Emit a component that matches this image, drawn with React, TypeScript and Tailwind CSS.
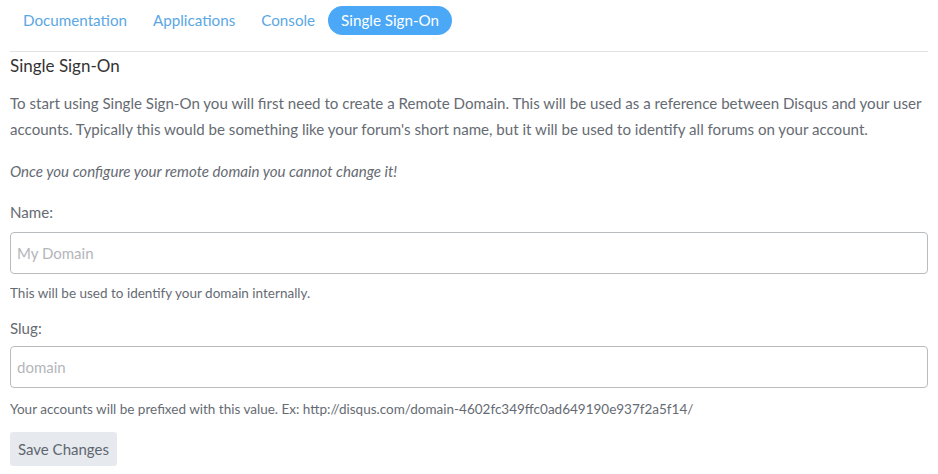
const tabs = ['Documentation', 'Applications', 'Console', 'Single Sign-On'];

const App = () => {
  const active = 'Single Sign-On';

  return (
    <div className="min-h-screen bg-white px-[10px] font-['Lato','Liberation_Sans',sans-serif] text-[15.1px] text-[#666b73]">
      <nav className="flex items-center pt-[6px] pb-[16px] border-b border-[#e2e2e2]">
        {tabs.map((tab) => (
          <a
            key={tab}
            className={
              tab === active
                ? 'h-[29px] px-[13px] flex items-center rounded-full bg-[#4aa8f6] text-[15.2px] text-white'
                : 'h-[29px] px-[13px] flex items-center text-[15.2px] text-[#5aa7e4]'
            }
          >
            {tab}
          </a>
        ))}
      </nav>

      <h2 className="mt-[1px] text-[17px] leading-[26px] text-[#333]">Single Sign-On</h2>

      <p className="mt-[11px] leading-[26px]">
        To start using Single Sign-On you will first need to create a Remote Domain. This will be used as a
        reference between Disqus and your user accounts. Typically this would be something like your forum's
        short name, but it will be used to identify all forums on your account.
      </p>

      <p className="mt-[16px] leading-[26px] italic">Once you configure your remote domain you cannot change it!</p>

      <form className="mt-[15px]" onSubmit={(e) => e.preventDefault()}>
        <label className="block leading-[26px]">Name:</label>
        <input
          className="mt-[7px] block w-full h-[42px] px-[6px] rounded-[4px] border border-[#b9bcbf] bg-white text-[15px] placeholder:text-[#b3b6ba] outline-none"
          placeholder="My Domain"
        />
        <p className="mt-[9px] text-[13.5px] leading-[20px]">This will be used to identify your domain internally.</p>

        <label className="mt-[12px] block leading-[26px]">Slug:</label>
        <input
          className="mt-[5px] block w-full h-[42px] px-[6px] rounded-[4px] border border-[#b9bcbf] bg-white text-[15px] placeholder:text-[#b3b6ba] outline-none"
          placeholder="domain"
        />
        <p className="mt-[11px] text-[13.5px] leading-[20px]">
          Your accounts will be prefixed with this value. Ex: http://disqus.com/domain-4602fc349ffc0ad649190e937f2a5f14/
        </p>

        <button
          type="submit"
          className="mt-[13px] h-[34px] px-[8px] rounded-[3px] bg-[#e6e9ee] text-[15px] text-[#5f6670]"
        >
          Save Changes
        </button>
      </form>
    </div>
  );
};

export default App;
